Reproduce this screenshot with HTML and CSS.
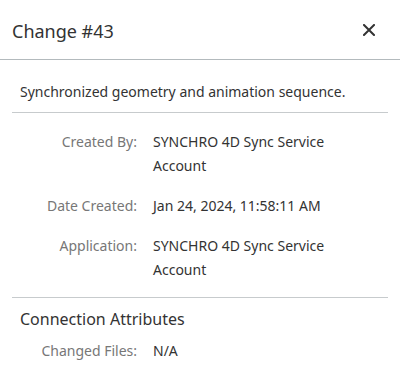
FILE: index.html
```html
<!DOCTYPE html>
<html>
<head>
<meta charset="utf-8">
<link rel="stylesheet" href="styles.css">
</head>
<body>
<div class="panel">
  <div class="header">
    <div class="title">Change #43</div>
    <button class="close" aria-label="Close">
      <svg width="12" height="12" viewBox="0 0 12 12"><path d="M1 1 L11 11 M11 1 L1 11" stroke="#333" stroke-width="2" stroke-linecap="square"/></svg>
    </button>
  </div>
  <div class="content">
    <div class="desc">Synchronized geometry and animation sequence.</div>
    <div class="props">
      <div class="label">Created By:</div>
      <div class="value">SYNCHRO 4D Sync Service Account</div>
      <div class="label">Date Created:</div>
      <div class="value">Jan 24, 2024, 11:58:11 AM</div>
      <div class="label">Application:</div>
      <div class="value">SYNCHRO 4D Sync Service Account</div>
    </div>
    <div class="section">
      <div class="section-title">Connection Attributes</div>
      <div class="props compact">
        <div class="label">Changed Files:</div>
        <div class="value">N/A</div>
      </div>
    </div>
  </div>
</div>
</body>
</html>
```
FILE: styles.css
```css
* { box-sizing: border-box; }
body {
  margin: 0;
  background: #fff;
  font-family: "Noto Sans", "Open Sans", sans-serif;
  color: #333;
  font-size: 14px;
}
.panel { width: 400px; }
.header {
  height: 60px;
  display: flex;
  align-items: center;
  justify-content: space-between;
  padding: 0 12px;
  border-bottom: 1px solid #b3babd;
}
.title {
  font-size: 18px;
  color: #333;
  line-height: 24px;
  margin-top: 2px;
}
.close {
  border: 0;
  background: none;
  padding: 0;
  width: 12px;
  height: 12px;
  margin-right: 13px;
  display: flex;
}
.content { padding: 0 12px; }
.desc {
  padding: 22px 8px 10px;
  line-height: 20px;
  border-bottom: 1px solid #c7cbcd;
}
.props {
  display: grid;
  grid-template-columns: 117px 1fr;
  column-gap: 16px;
  row-gap: 16px;
  padding: 17px 8px 15px;
  line-height: 24px;
}
.label { text-align: right; color: #777; }
.value { color: #333; }
.section {
  border-top: 1px solid #c7cbcd;
  padding: 9px 8px 0;
}
.section-title {
  font-size: 16px;
  line-height: 24px;
  color: #333;
}
.props.compact { padding: 8px 0 0; }
```
